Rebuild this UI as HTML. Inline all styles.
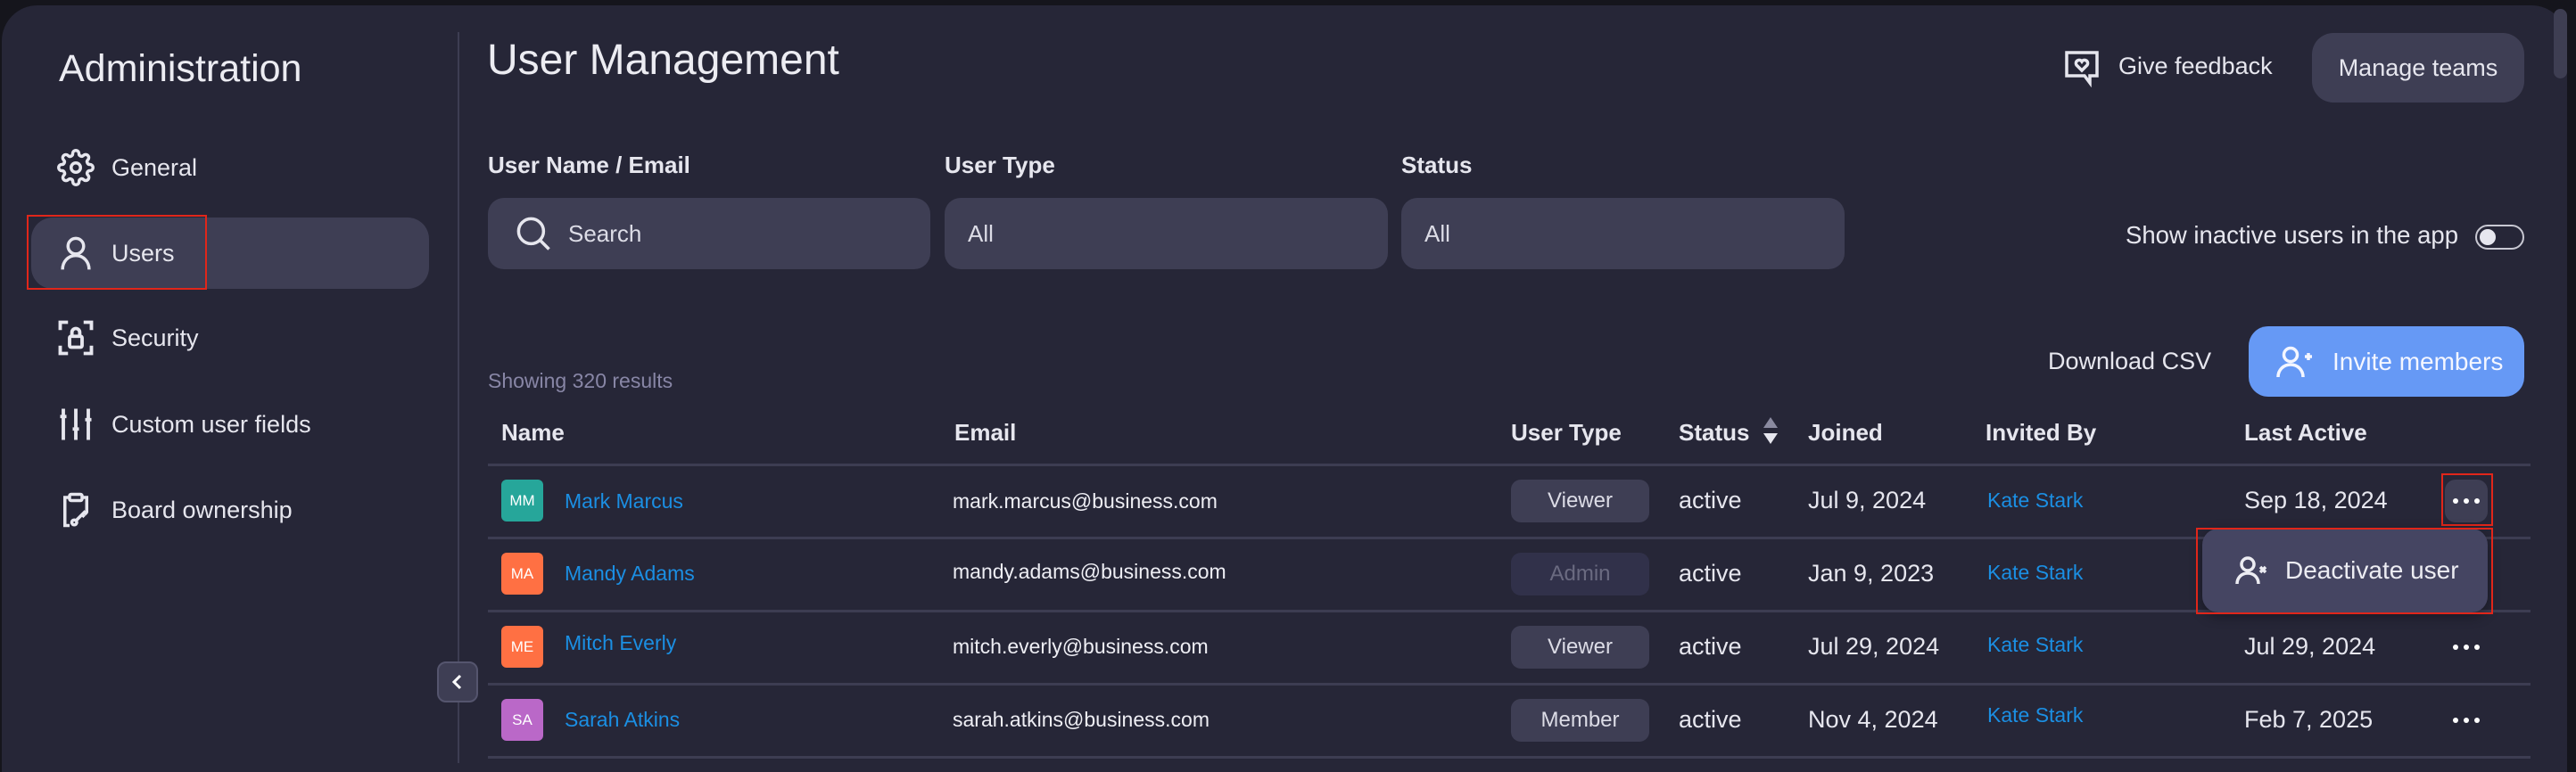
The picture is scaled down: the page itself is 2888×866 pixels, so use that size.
<!DOCTYPE html>
<html><head><meta charset="utf-8"><style>
*{margin:0;padding:0;box-sizing:border-box}
body{width:2888px;height:856px;background:#15151c;font-family:"Liberation Sans",sans-serif;color:#e6e6ee;position:relative;overflow:hidden}
.panel{position:absolute;left:2px;top:6px;width:2876px;height:860px;background:#262637;border-radius:40px 40px 0 0}
.a{position:absolute;white-space:nowrap}
.nav{position:absolute;left:64px;font-size:27px;color:#e6e6ee;display:flex;align-items:center}
.nav svg{width:42px;height:42px;margin-right:19px}
.lbl{font-size:26px;font-weight:bold;color:#e6e6ee}
.inp{position:absolute;top:222px;height:80px;background:#3e3e54;border-radius:18px;font-size:26px;color:#dcdce6;display:flex;align-items:center}
.th{position:absolute;top:470px;font-size:26px;font-weight:bold;color:#e6e6ee}
.line{position:absolute;left:547px;width:2290px;height:3px;background:#3d3d52}
.av{position:absolute;left:562px;width:47px;height:47px;border-radius:6px;font-size:17px;color:#fff;display:flex;align-items:center;justify-content:center}
.nm{position:absolute;left:633px;font-size:23px;color:#1b8fe3}
.em{position:absolute;left:1068px;font-size:23px;color:#eeeef4}
.bd{position:absolute;left:1694px;width:155px;height:48px;border-radius:11px;background:#3e3e54;font-size:24px;color:#dcdce6;display:flex;align-items:center;justify-content:center}
.st{position:absolute;left:1882px;font-size:27px;color:#e6e6ee}
.jn{position:absolute;left:2027px;font-size:27px;color:#e6e6ee}
.kb{position:absolute;left:2228px;font-size:23px;color:#1b8fe3}
.la{position:absolute;left:2516px;font-size:27px;color:#e6e6ee}
.dots{position:absolute;left:2750px;width:30px;height:6px;display:flex;justify-content:space-between}
.dots i{width:6px;height:6px;border-radius:50%;background:#fff;display:block}
</style></head><body>
<div class="panel"></div>
<div class="a" style="left:513px;top:36px;width:2px;height:820px;background:#3d3d52"></div>
<div class="a" style="left:66px;top:53px;font-size:43px;color:#ececf2">Administration</div>

<div class="a" style="left:35px;top:244px;width:446px;height:80px;background:#3e3e54;border-radius:24px"></div>
<div class="a" style="left:30px;top:241px;width:202px;height:84px;border:2px solid #e0261a"></div>

<div class="nav" style="top:167px"><svg viewBox="0 0 24 24" fill="none" stroke="#e6e6ee" stroke-width="2"><circle cx="12" cy="12" r="3"/><path d="M19.4 15a1.65 1.65 0 0 0 .33 1.820l.06.06a2 2 0 1 1-2.83 2.830l-.06-.06a1.65 1.65 0 0 0-1.82-.33 1.65 1.65 0 0 0-1 1.51V21a2 2 0 1 1-4 0v-.09A1.65 1.65 0 0 0 9 19.4a1.65 1.65 0 0 0-1.82.33l-.06.06a2 2 0 1 1-2.83-2.83l.06-.06A1.65 1.65 0 0 0 4.68 15a1.65 1.65 0 0 0-1.51-1H3a2 2 0 1 1 0-4h.09A1.65 1.65 0 0 0 4.6 9a1.65 1.65 0 0 0-.33-1.82l-.06-.06a2 2 0 1 1 2.83-2.83l.06.06A1.65 1.65 0 0 0 9 4.68 1.65 1.65 0 0 0 10 3.17V3a2 2 0 1 1 4 0v.09a1.65 1.65 0 0 0 1 1.51 1.65 1.65 0 0 0 1.820-.33l.06-.06a2 2 0 1 1 2.83 2.83l-.06.06A1.65 1.65 0 0 0 19.4 9a1.65 1.65 0 0 0 1.51 1H21a2 2 0 1 1 0 4h-.09a1.65 1.65 0 0 0-1.51 1z"/></svg>General</div>
<div class="nav" style="top:263px"><svg viewBox="0 0 24 24" fill="none" stroke="#e6e6ee" stroke-width="2"><circle cx="12" cy="7.5" r="5"/><path d="M3.5 22.5c0-5 3.5-9 8.5-9s8.5 4 8.5 9"/></svg>Users</div>
<div class="nav" style="top:358px"><svg viewBox="0 0 24 24" fill="none" stroke="#e6e6ee" stroke-width="2.2"><path d="M2 7V2h5M17 2h5v5M22 17v5h-5M7 22H2v-5"/><rect x="8" y="11" width="8" height="7" rx="1"/><path d="M9.5 11V8.5a2.5 2.5 0 0 1 5 0V11"/></svg>Security</div>
<div class="nav" style="top:455px"><svg viewBox="0 0 24 24" fill="none" stroke="#e6e6ee" stroke-width="2.2"><path d="M4 2v20M12 2v20M20 2v20M2 7h4M10 15h4M18 9h4"/></svg>Custom user fields</div>
<div class="nav" style="top:551px"><svg viewBox="0 0 24 24" fill="none" stroke="#e6e6ee" stroke-width="2"><path d="M8 4H5v18h3M16 4h3v10"/><rect x="8" y="2" width="8" height="4" rx="1"/><circle cx="11" cy="20" r="1.6"/><path d="M12.2 18.8l6-6M16 15l1.5 1.5M17.5 13.5l1.5 1.5"/></svg>Board ownership</div>

<div class="a" style="left:490px;top:742px;width:46px;height:46px;background:#3e3e54;border:2px solid #55556e;border-radius:10px;display:flex;align-items:center;justify-content:center"><svg width="20" height="20" viewBox="0 0 20 20"><path d="M13 3L6 10l7 7" fill="none" stroke="#fff" stroke-width="3"/></svg></div>

<div class="a" style="left:546px;top:40px;font-size:48px;color:#ececf2">User Management</div>

<div class="a" style="left:2314px;top:56px"><svg width="40" height="42" viewBox="0 0 40 42" fill="none" stroke="#e6e6ee" stroke-width="3.5"><path d="M3 3h34v26H29v8l-6-8H3z"/><path d="M20 23l-6-6a3.5 3.5 0 0 1 6-4 3.5 3.5 0 0 1 6 4z"/></svg></div>
<div class="a" style="left:2375px;top:59px;font-size:27px;color:#e6e6ee">Give feedback</div>
<div class="a" style="left:2592px;top:37px;width:238px;height:78px;background:#3e3e54;border-radius:24px;font-size:27px;display:flex;align-items:center;justify-content:center;color:#e6e6ee">Manage teams</div>
<div class="a" style="left:2863px;top:10px;width:15px;height:78px;background:#3e3e52;border-radius:8px"></div>

<div class="a lbl" style="left:547px;top:170px">User Name / Email</div>
<div class="a lbl" style="left:1059px;top:170px">User Type</div>
<div class="a lbl" style="left:1571px;top:170px">Status</div>
<div class="inp" style="left:547px;width:496px"><svg style="margin:0 18px 0 30px" width="42" height="42" viewBox="0 0 24 24" fill="none" stroke="#e6e6ee" stroke-width="2"><circle cx="10.5" cy="10.5" r="8"/><path d="M16.5 16.5L22 22"/></svg>Search</div>
<div class="inp" style="left:1059px;width:497px;padding-left:26px">All</div>
<div class="inp" style="left:1571px;width:497px;padding-left:26px">All</div>

<div class="a" style="left:2383px;top:248px;font-size:27.5px;color:#e6e6ee">Show inactive users in the app</div>
<div class="a" style="left:2775px;top:252px;width:55px;height:28px;border:2px solid #c8c8d2;border-radius:14px"><div style="position:absolute;left:3px;top:3px;width:18px;height:18px;border-radius:50%;background:#e6e6ee"></div></div>

<div class="a" style="left:547px;top:414px;font-size:23px;color:#8886a6">Showing 320 results</div>
<div class="a" style="left:2296px;top:390px;font-size:27px;color:#e6e6ee">Download CSV</div>
<div class="a" style="left:2521px;top:366px;width:309px;height:79px;background:#6699f5;border-radius:22px;display:flex;align-items:center;font-size:28px;color:#f4f6ff"><svg style="margin:0 22px 0 30px" width="42" height="36" viewBox="0 0 42 36" fill="none" stroke="#f4f6ff" stroke-width="3.5"><circle cx="17" cy="10" r="7.5"/><path d="M3 35c0-8 6-14 14-14s14 6 14 14M33 12h8M37 8v8"/></svg>Invite members</div>

<div class="th" style="left:562px">Name</div>
<div class="th" style="left:1070px">Email</div>
<div class="th" style="left:1694px">User Type</div>
<div class="th" style="left:1882px">Status</div>
<div class="a" style="left:1975px;top:468px"><svg width="20" height="30" viewBox="0 0 20 30"><path d="M10 0L18 12H2z" fill="#8a8aa0"/><path d="M10 30L18 18H2z" fill="#e6e6ee"/></svg></div>
<div class="th" style="left:2027px">Joined</div>
<div class="th" style="left:2226px">Invited By</div>
<div class="th" style="left:2516px">Last Active</div>

<div class="line" style="top:520px"></div>
<div class="line" style="top:602px"></div>
<div class="line" style="top:684px"></div>
<div class="line" style="top:766px"></div>
<div class="line" style="top:848px"></div>

<div class="av" style="top:538px;background:#26a69a">MM</div>
<div class="nm" style="top:549px">Mark Marcus</div>
<div class="em" style="top:549px">mark.marcus@business.com</div>
<div class="bd" style="top:538px">Viewer</div>
<div class="st" style="top:546px">active</div>
<div class="jn" style="top:546px">Jul 9, 2024</div>
<div class="kb" style="top:548px">Kate Stark</div>
<div class="la" style="top:546px">Sep 18, 2024</div>
<div class="a" style="left:2741px;top:538px;width:48px;height:48px;background:#3e3e54;border-radius:12px"></div>
<div class="dots" style="top:559px"><i></i><i></i><i></i></div>
<div class="a" style="left:2737px;top:531px;width:58px;height:59px;border:2px solid #e0261a"></div>

<div class="av" style="top:620px;background:#ff7043">MA</div>
<div class="nm" style="top:630px">Mandy Adams</div>
<div class="em" style="top:628px">mandy.adams@business.com</div>
<div class="bd" style="top:620px;background:#31314a;color:#6a6a80">Admin</div>
<div class="st" style="top:628px">active</div>
<div class="jn" style="top:628px">Jan 9, 2023</div>
<div class="kb" style="top:629px">Kate Stark</div>

<div class="av" style="top:702px;background:#ff7043">ME</div>
<div class="nm" style="top:708px">Mitch Everly</div>
<div class="em" style="top:712px">mitch.everly@business.com</div>
<div class="bd" style="top:702px">Viewer</div>
<div class="st" style="top:710px">active</div>
<div class="jn" style="top:710px">Jul 29, 2024</div>
<div class="kb" style="top:710px">Kate Stark</div>
<div class="la" style="top:710px">Jul 29, 2024</div>
<div class="dots" style="top:723px"><i></i><i></i><i></i></div>

<div class="av" style="top:784px;background:#ba68c8">SA</div>
<div class="nm" style="top:794px">Sarah Atkins</div>
<div class="em" style="top:794px">sarah.atkins@business.com</div>
<div class="bd" style="top:784px">Member</div>
<div class="st" style="top:792px">active</div>
<div class="jn" style="top:792px">Nov 4, 2024</div>
<div class="kb" style="top:789px">Kate Stark</div>
<div class="la" style="top:792px">Feb 7, 2025</div>
<div class="dots" style="top:805px"><i></i><i></i><i></i></div>

<div class="a" style="left:2469px;top:593px;width:320px;height:94px;background:#454562;border-radius:18px;box-shadow:0 4px 14px rgba(0,0,0,.4);display:flex;align-items:center;font-size:28px;color:#ececf2"><svg style="margin:0 20px 0 37px" width="36" height="32" viewBox="0 0 36 32" fill="none" stroke="#ececf2" stroke-width="3.5"><circle cx="14" cy="9" r="7"/><path d="M2 31c0-7 5-12 12-12s12 5 12 12M28 12l6 6M34 12l-6 6"/></svg>Deactivate user</div>
<div class="a" style="left:2462px;top:592px;width:333px;height:97px;border:2px solid #e0261a"></div>
</body></html>
